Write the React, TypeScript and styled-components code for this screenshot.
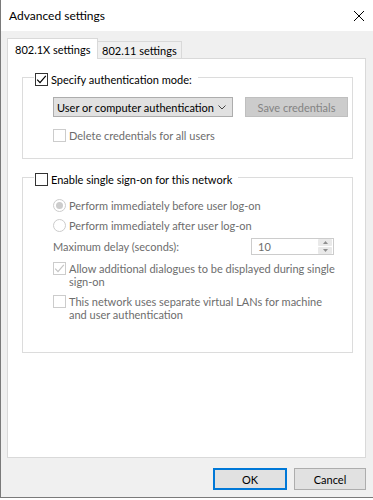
import React from "react";
import styled, { createGlobalStyle } from "styled-components";

const Global = createGlobalStyle`
  html, body { margin: 0; padding: 0; background: #ffffff; }
  body {
    font-family: Lato, "Liberation Sans", sans-serif;
    font-size: 11px;
    color: #000000;
  }
  * { box-sizing: border-box; }
`;

const Window = styled.div`
  width: 373px;
  height: 498px;
  display: flex;
  flex-direction: column;
  background: #f0f0f0;
  border-left: 1px solid #7a7a7a;
  border-bottom: 1px solid #7a7a7a;
`;

const TitleBar = styled.div`
  flex: none;
  height: 31px;
  background: #ffffff;
  display: flex;
  align-items: center;
  justify-content: space-between;
  padding: 0 9px 0 8px;
`;

const Title = styled.span`
  font-size: 12px;
  line-height: 16px;
  color: #000;
`;

const CloseIcon = styled.svg`
  width: 10px;
  height: 10px;
  display: block;
`;

const Body = styled.div`
  flex: 1;
  display: flex;
  flex-direction: column;
  padding: 7px 7px 0 6px;
`;

const TabStrip = styled.div`
  display: flex;
  align-items: flex-end;
  height: 20px;
`;

const Tab = styled.div<{ $active?: boolean; $width: number }>`
  position: relative;
  z-index: ${(p) => (p.$active ? 1 : 0)};
  width: ${(p) => p.$width}px;
  height: ${(p) => (p.$active ? 21 : 17)}px;
  margin-bottom: ${(p) => (p.$active ? -1 : 0)}px;
  background: ${(p) => (p.$active ? "#ffffff" : "#f0f0f0")};
  border: 1px solid #d9d9d9;
  border-bottom: none;
  border-left: ${(p) => (p.$active ? "1px solid #d9d9d9" : "none")};
  padding-left: ${(p) => (p.$active ? 7 : 4)}px;
  display: flex;
  align-items: center;
  font-size: 11px;
  white-space: nowrap;
`;

const Panel = styled.div`
  width: 359px;
  height: 400px;
  background: #ffffff;
  border: 1px solid #d9d9d9;
  padding: 18px 12px 0 14px;
  display: flex;
  flex-direction: column;
  gap: 18px;
`;

const Group = styled.div<{ $height: number }>`
  position: relative;
  height: ${(p) => p.$height}px;
  border: 1px solid #dcdcdc;
`;

const Legend = styled.div`
  position: absolute;
  top: -5px;
  left: 11px;
  padding: 0 6px 0 1px;
  background: #ffffff;
  display: flex;
  align-items: center;
  gap: 3px;
  height: 13px;
`;

const GroupBody = styled.div<{ $top: number }>`
  display: flex;
  flex-direction: column;
  padding: ${(p) => p.$top}px 0 0 30px;
`;

const Stack = styled.div`
  display: flex;
  flex-direction: column;
  gap: 7px;
`;

const Box = styled.span<{ $disabled?: boolean }>`
  flex: none;
  width: 13px;
  height: 13px;
  border: 1px solid ${(p) => (p.$disabled ? "#cccccc" : "#333333")};
  background: #ffffff;
  display: flex;
  align-items: center;
  justify-content: center;
`;

const RadioCircle = styled.span`
  flex: none;
  width: 13px;
  height: 13px;
  border: 1px solid #cccccc;
  border-radius: 50%;
  background: #ffffff;
  display: flex;
  align-items: center;
  justify-content: center;
`;

const RadioDot = styled.span`
  width: 7px;
  height: 7px;
  border-radius: 50%;
  background: #cccccc;
`;

const Label = styled.span<{ $disabled?: boolean }>`
  font-size: 11px;
  line-height: 13px;
  color: ${(p) => (p.$disabled ? "#6d6d6d" : "#000000")};
  white-space: nowrap;
`;

const OptionRow = styled.div`
  display: flex;
  align-items: flex-start;
  gap: 3px;
  min-height: 13px;
`;

const ControlRow = styled.div`
  display: flex;
  gap: 12px;
  margin-bottom: 12px;
`;

const Dropdown = styled.div`
  width: 180px;
  height: 20px;
  background: #e1e1e1;
  border: 1px solid #adadad;
  display: flex;
  align-items: center;
  justify-content: space-between;
  padding: 0 6px 0 3px;
  white-space: nowrap;
`;

const Chevron = styled.svg`
  width: 8px;
  height: 5px;
  display: block;
`;

const FlatButton = styled.div`
  width: 103px;
  height: 20px;
  background: #cccccc;
  border: 1px solid #bfbfbf;
  color: #838383;
  display: flex;
  align-items: center;
  justify-content: center;
  white-space: nowrap;
`;

const DelayRow = styled.div`
  display: flex;
  align-items: center;
  height: 17px;
  margin-top: -1px;
`;

const DelayLabel = styled.span`
  width: 198px;
  color: #6d6d6d;
  white-space: nowrap;
`;

const SpinBox = styled.div`
  width: 83px;
  height: 17px;
  border: 1px solid #cccccc;
  background: #ffffff;
  display: flex;
  align-items: center;
  padding-left: 6px;
  color: #6d6d6d;
`;

const SpinButtons = styled.div`
  margin-left: auto;
  width: 15px;
  height: 15px;
  display: flex;
  flex-direction: column;
  gap: 1px;
  padding: 0 1px 0 0;
`;

const SpinCell = styled.div`
  flex: 1;
  background: #e9e9e9;
  border-radius: 1px;
  display: flex;
  align-items: center;
  justify-content: center;
`;

const Footer = styled.div`
  display: flex;
  justify-content: flex-end;
  gap: 7px;
  padding-top: 10px;
`;

const DialogButton = styled.button<{ $primary?: boolean; $width: number }>`
  width: ${(p) => p.$width}px;
  height: 22px;
  background: #e1e1e1;
  border: ${(p) => (p.$primary ? "2px solid #0078d7" : "1px solid #adadad")};
  font-family: inherit;
  font-size: 11px;
  color: #000;
  padding: 0;
  display: flex;
  align-items: center;
  justify-content: center;
`;

const Check = ({ color }: { color: string }) => (
  <svg width="11" height="11" viewBox="0 0 11 11">
    <path d="M1.2 5.6 L4 8.6 L9.8 1.8" fill="none" stroke={color} strokeWidth="1.2" />
  </svg>
);

const CheckBox = ({ checked, disabled }: { checked?: boolean; disabled?: boolean }) => (
  <Box $disabled={disabled}>{checked && <Check color={disabled ? "#c4c4c4" : "#000"} />}</Box>
);

const Radio = ({ selected }: { selected?: boolean }) => (
  <RadioCircle>{selected && <RadioDot />}</RadioCircle>
);

const Arrow = ({ up }: { up?: boolean }) => (
  <svg width="5" height="3" viewBox="0 0 5 3">
    <path d={up ? "M0 3 L2.5 0 L5 3 Z" : "M0 0 L2.5 3 L5 0 Z"} fill="#8f8f8f" />
  </svg>
);

export default function App() {
  return (
    <>
      <Global />
      <Window>
        <TitleBar>
          <Title>Advanced settings</Title>
          <CloseIcon viewBox="0 0 10 10">
            <path d="M0 0 L10 10 M10 0 L0 10" stroke="#000" strokeWidth="1" />
          </CloseIcon>
        </TitleBar>
        <Body>
          <TabStrip>
            <Tab $active $width={91}>802.1X settings</Tab>
            <Tab $width={84}>802.11 settings</Tab>
          </TabStrip>
          <Panel>
            <Group $height={82}>
              <Legend>
                <CheckBox checked />
                <Label>Specify authentication mode:</Label>
              </Legend>
              <GroupBody $top={19}>
                <ControlRow>
                  <Dropdown>
                    <span>User or computer authentication</span>
                    <Chevron viewBox="0 0 8 5">
                      <path d="M0.5 0.5 L4 4 L7.5 0.5" fill="none" stroke="#444" strokeWidth="1" />
                    </Chevron>
                  </Dropdown>
                  <FlatButton>Save credentials</FlatButton>
                </ControlRow>
                <OptionRow>
                  <CheckBox disabled />
                  <Label $disabled>Delete credentials for all users</Label>
                </OptionRow>
              </GroupBody>
            </Group>
            <Group $height={176}>
              <Legend>
                <CheckBox />
                <Label>Enable single sign-on for this network</Label>
              </Legend>
              <GroupBody $top={21}>
                <Stack>
                  <OptionRow>
                    <Radio selected />
                    <Label $disabled>Perform immediately before user log-on</Label>
                  </OptionRow>
                  <OptionRow>
                    <Radio />
                    <Label $disabled>Perform immediately after user log-on</Label>
                  </OptionRow>
                  <DelayRow>
                    <DelayLabel>Maximum delay (seconds):</DelayLabel>
                    <SpinBox>
                      <span>10</span>
                      <SpinButtons>
                        <SpinCell><Arrow up /></SpinCell>
                        <SpinCell><Arrow /></SpinCell>
                      </SpinButtons>
                    </SpinBox>
                  </DelayRow>
                  <OptionRow>
                    <CheckBox checked disabled />
                    <Label $disabled>
                      Allow additional dialogues to be displayed during single
                      <br />
                      sign-on
                    </Label>
                  </OptionRow>
                  <OptionRow>
                    <CheckBox disabled />
                    <Label $disabled>
                      This network uses separate virtual LANs for machine
                      <br />
                      and user authentication
                    </Label>
                  </OptionRow>
                </Stack>
              </GroupBody>
            </Group>
          </Panel>
          <Footer>
            <DialogButton $primary $width={74}>OK</DialogButton>
            <DialogButton $width={72}>Cancel</DialogButton>
          </Footer>
        </Body>
      </Window>
    </>
  );
}
